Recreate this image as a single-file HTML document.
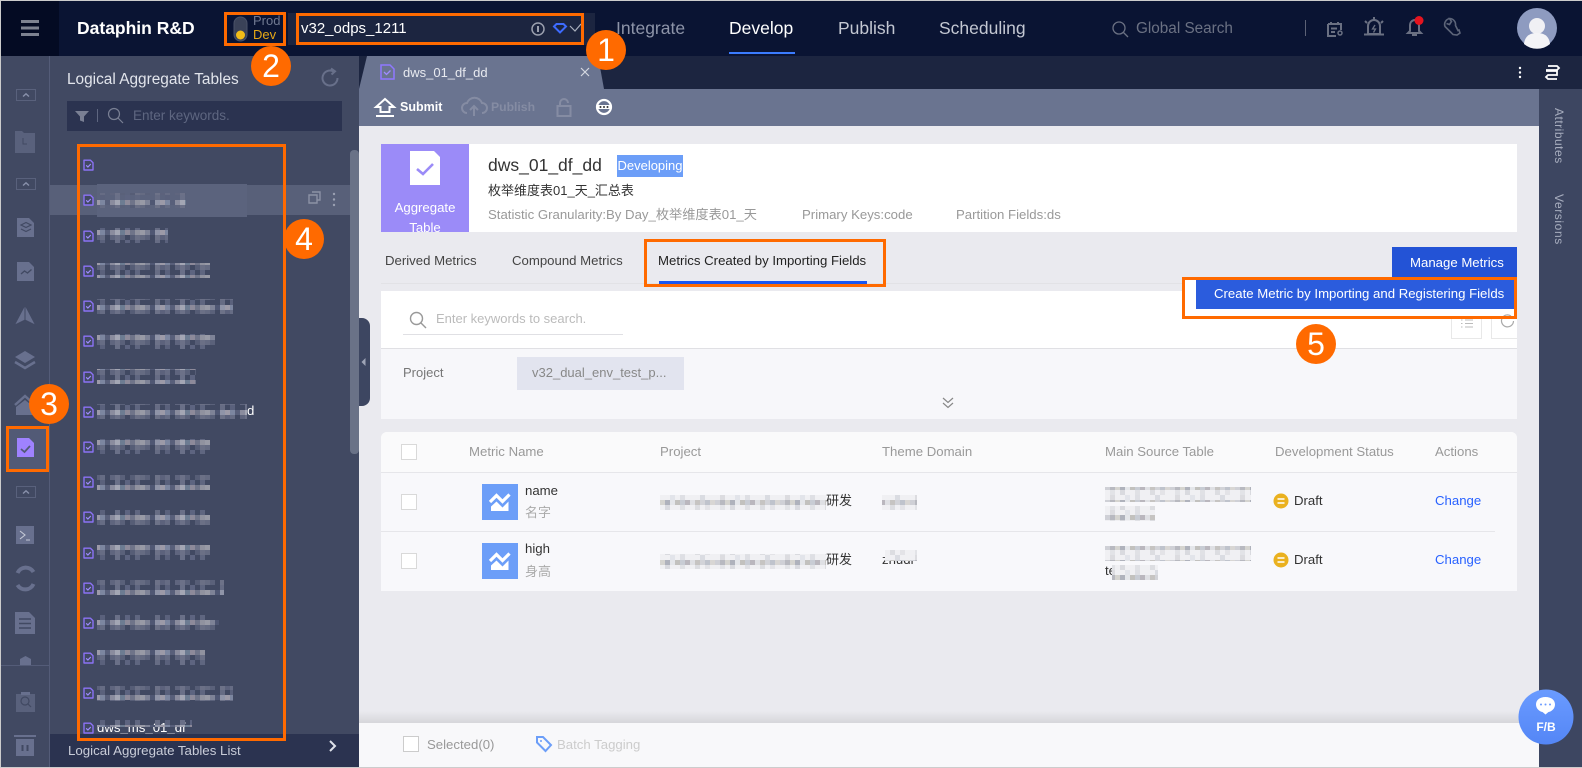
<!DOCTYPE html>
<html lang="en"><head><meta charset="utf-8"><title>Dataphin R&amp;D</title>
<style>
html,body{margin:0;padding:0;width:1582px;height:768px;overflow:hidden;background:#ccc}
body{position:relative;font-family:"Liberation Sans","Noto Sans CJK SC",sans-serif;font-size:13.2px;color:#333}
.a{position:absolute;box-sizing:border-box}
.t{position:absolute;white-space:nowrap;line-height:20px;height:20px}
.ob{position:absolute;box-sizing:border-box;border:3px solid #ff6a00;z-index:5}
.bd{position:absolute;width:40px;height:40px;border-radius:50%;background:#ff6a00;color:#fff;font-size:32px;line-height:40px;text-align:center;z-index:6}
.cb{position:absolute;box-sizing:border-box;width:16px;height:16px;background:#fff;border:1px solid #d9d9d9}
svg{position:absolute;left:0;top:0;overflow:visible}
</style></head><body>
<!-- structure -->
<div class="a" style="left:1px;top:1px;width:1581px;height:55px;background:#0a1433"></div>
<div class="a" style="left:1px;top:1px;width:58px;height:55px;background:#040b23"></div>
<div class="a" style="left:288px;top:13px;width:307px;height:32px;background:#1c2540"></div>
<div class="a" style="left:1px;top:56px;width:358px;height:711px;background:#414962"></div>
<div class="a" style="left:49px;top:56px;width:1px;height:711px;background:#545c78"></div>
<div class="a" style="left:359px;top:56px;width:1223px;height:33px;background:#1c2540"></div>
<div class="a" style="left:359px;top:89px;width:1180px;height:37px;background:#6a7490"></div>
<div class="a" style="left:359px;top:126px;width:1180px;height:641px;background:#eaeaef"></div>
<div class="a" style="left:1539px;top:89px;width:43px;height:678px;background:#3d4661"></div>
<div class="a" style="left:359px;top:56px;width:245px;height:33px;background:#6a7490;clip-path:polygon(8px 0,239px 0,245px 33px,0 33px)"></div>
<div class="a" style="left:67px;top:101px;width:275px;height:30px;background:#2b3350"></div>
<div class="a" style="left:50px;top:185px;width:300px;height:30px;background:#586079"></div>
<div class="a" style="left:350px;top:150px;width:9px;height:304px;background:#6a7287;border-radius:4px"></div>
<div class="a" style="left:50px;top:734px;width:309px;height:33px;background:#2b3350"></div>
<div class="a" style="left:6px;top:426px;width:43px;height:46px;background:#525a76"></div>
<div class="a" style="left:1px;top:665px;width:48px;height:1px;background:#545c78"></div>
<!-- card -->
<div class="a" style="left:381px;top:144px;width:1136px;height:88px;background:#fff"></div>
<div class="a" style="left:381px;top:144px;width:88px;height:88px;background:#9b8bf8;overflow:hidden;color:#fff;text-align:center;line-height:20px;padding-top:54px">Aggregate<br>Table</div>
<div class="a" style="left:381px;top:283px;width:1136px;height:1px;background:#e2e2e6"></div>
<div class="a" style="left:381px;top:291px;width:1136px;height:57px;background:#fff"></div>
<div class="a" style="left:381px;top:348px;width:1136px;height:71px;background:#f7f7fa;border-top:1px solid #e0e0e4"></div>
<div class="a" style="left:403px;top:334px;width:220px;height:1px;background:#e0e0e4"></div>
<div class="a" style="left:517px;top:357px;width:167px;height:33px;background:#e2e4ef"></div>
<div class="a" style="left:1451px;top:308px;width:31px;height:31px;background:#fff;border:1px solid #e8e8e8"></div>
<div class="a" style="left:1491px;top:308px;width:26px;height:31px;background:#fff;border:1px solid #e8e8e8;border-right:0"></div>
<div class="a" style="left:359px;top:318px;width:11px;height:88px;background:#3d4661;border-radius:0 8px 8px 0"></div>
<!-- buttons -->
<div class="a" style="left:1392px;top:247px;width:125px;height:30px;background:#2353d6"></div>
<div class="a" style="left:1182px;top:277px;width:335px;height:42px;background:#fff"></div>
<div class="a" style="left:1196px;top:280px;width:318px;height:29px;background:#2b5cdd"></div>
<!-- table -->
<div class="a" style="left:381px;top:432px;width:1136px;height:159px;background:#f8f8fb;border-radius:6px 6px 0 0"></div>
<div class="a" style="left:381px;top:432px;width:1136px;height:41px;background:#fafafb;border-radius:6px 6px 0 0;border-bottom:1px solid #e6e6ea"></div>
<div class="a" style="left:381px;top:531px;width:1114px;height:1px;background:#e6e6ea"></div>
<div class="cb" style="left:401px;top:444px"></div><div class="cb" style="left:401px;top:494px"></div><div class="cb" style="left:401px;top:553px"></div>
<div class="a" style="left:482px;top:484px;width:36px;height:36px;background:#6c9ef8"></div>
<div class="a" style="left:482px;top:543px;width:36px;height:36px;background:#6c9ef8"></div>
<!-- bottom bar -->
<div class="a" style="left:359px;top:703px;width:1180px;height:20px;background:linear-gradient(#eaeaef 40%,#d6d6da)"></div>
<div class="a" style="left:359px;top:723px;width:1180px;height:44px;background:#f8f8fa"></div>
<div class="cb" style="left:403px;top:736px;border-color:#ccc"></div>

<!-- text -->
<div class="t" style="left:77px;top:18px;font-size:17.5px;font-weight:bold;color:#fff">Dataphin R&amp;D</div>
<div class="t" style="left:253px;top:11px;color:#6f7890;font-size:13px">Prod</div>
<div class="t" style="left:253px;top:25px;color:#e6a817;font-size:13px">Dev</div>
<div class="t" style="left:301px;top:19px;font-size:15px;color:#fff">v32_odps_1211</div>
<div class="t" style="left:616px;top:18px;font-size:17.5px;color:#8d94a8">Integrate</div>
<div class="t" style="left:729px;top:18px;font-size:17.5px;color:#fff">Develop</div>
<div class="t" style="left:838px;top:18px;font-size:17.5px;color:#c3c7d2">Publish</div>
<div class="t" style="left:939px;top:18px;font-size:17.5px;color:#c3c7d2">Scheduling</div>
<div class="a" style="left:729px;top:52px;width:66px;height:2px;background:#3b7cff"></div>
<div class="t" style="left:1136px;top:19px;font-size:15.3px;color:#6b7183">Global Search</div>
<div class="t" style="left:67px;top:70px;font-size:15.4px;color:#e2e5ec">Logical Aggregate Tables</div>
<div class="t" style="left:133px;top:106px;font-size:13.5px;color:#5e6680">Enter keywords.</div>
<div class="t" style="left:68px;top:741px;font-size:13.3px;color:#c8ccd8">Logical Aggregate Tables List</div>
<div class="t" style="left:403px;top:63px;font-size:13px;color:#e8eaf0">dws_01_df_dd</div>
<div class="t" style="left:400px;top:97px;font-weight:bold;font-size:12.5px;color:#fff">Submit</div>
<div class="t" style="left:491px;top:97px;font-weight:bold;font-size:12.2px;color:#858ca3">Publish</div>
<div class="t" style="left:488px;top:155px;font-size:17.5px;color:#333">dws_01_df_dd</div>
<div class="a" style="left:617px;top:155px;width:66px;height:22px;background:#6c9ef8;color:#fff;line-height:22px;white-space:nowrap;overflow:hidden;text-align:center;font-size:13px">Developing</div>
<div class="t" style="left:488px;top:181px;font-size:13px;color:#333">枚举维度表01_天_汇总表</div>
<div class="t" style="left:488px;top:205px;color:#999">Statistic Granularity:By Day_枚举维度表01_天</div>
<div class="t" style="left:802px;top:205px;color:#999">Primary Keys:code</div>
<div class="t" style="left:956px;top:205px;color:#999">Partition Fields:ds</div>
<div class="t" style="left:385px;top:251px;color:#444">Derived Metrics</div>
<div class="t" style="left:512px;top:251px;color:#444">Compound Metrics</div>
<div class="t" style="left:658px;top:251px;color:#222">Metrics Created by Importing Fields</div>
<div class="a" style="left:659px;top:281px;width:208px;height:3px;background:#1a56f0;z-index:4"></div>
<div class="t" style="left:1410px;top:253px;color:#fff">Manage Metrics</div>
<div class="t" style="left:1214px;top:284px;color:#fff;font-size:13.2px">Create Metric by Importing and Registering Fields</div>
<div class="t" style="left:436px;top:309px;font-size:13px;color:#bbb">Enter keywords to search.</div>
<div class="t" style="left:403px;top:363px;font-size:13px;color:#777">Project</div>
<div class="t" style="left:532px;top:363px;font-size:13px;color:#888">v32_dual_env_test_p...</div>
<div class="t" style="left:469px;top:442px;color:#999">Metric Name</div>
<div class="t" style="left:660px;top:442px;color:#999">Project</div>
<div class="t" style="left:882px;top:442px;color:#999">Theme Domain</div>
<div class="t" style="left:1105px;top:442px;color:#999">Main Source Table</div>
<div class="t" style="left:1275px;top:442px;color:#999">Development Status</div>
<div class="t" style="left:1435px;top:442px;color:#999">Actions</div>
<div class="t" style="left:525px;top:481px">name</div>
<div class="t" style="left:525px;top:503px;font-size:13px;color:#aaa">名字</div>
<div class="t" style="left:525px;top:539px">high</div>
<div class="t" style="left:525px;top:562px;font-size:13px;color:#aaa">身高</div>
<div class="t" style="left:826px;top:491px;font-size:13px">研发</div>
<div class="t" style="left:826px;top:550px;font-size:13px">研发</div>
<div class="t" style="left:882px;top:550px">zhudi</div>
<div class="t" style="left:1105px;top:561px">te</div>
<div class="t" style="left:1294px;top:491px">Draft</div>
<div class="t" style="left:1294px;top:550px">Draft</div>
<div class="t" style="left:1435px;top:491px;color:#2962ff">Change</div>
<div class="t" style="left:1435px;top:550px;color:#2962ff">Change</div>
<div class="t" style="left:427px;top:735px;color:#999">Selected(0)</div>
<div class="t" style="left:557px;top:735px;color:#ccc">Batch Tagging</div>
<div class="t" style="left:247px;top:401px;color:#fff">d</div>
<div class="t" style="left:97px;top:718px;color:#fff;height:16px;overflow:hidden;line-height:20px">dws_ms_01_df</div>
<div class="a" style="left:1552px;top:108px;width:14px;height:60px;writing-mode:vertical-rl;font-size:12px;letter-spacing:.5px;line-height:14px;color:#a7adbe;white-space:nowrap">Attributes</div>
<div class="a" style="left:1552px;top:194px;width:14px;height:60px;writing-mode:vertical-rl;font-size:12px;letter-spacing:.6px;line-height:14px;color:#a7adbe;white-space:nowrap">Versions</div>

<!-- icons + mosaics -->
<svg width="1582" height="768" viewBox="0 0 1582 768" style="z-index:3">
<defs>
<pattern id="m1" width="65" height="15" patternUnits="userSpaceOnUse">
<rect x="5" y="0" width="5" height="5" fill="#5f6680"/><rect x="25" y="0" width="5" height="5" fill="#666c84"/><rect x="35" y="0" width="5" height="5" fill="#5a617c"/><rect x="50" y="0" width="5" height="5" fill="#6a7088"/><rect x="60" y="0" width="5" height="5" fill="#5d6480"/>
<rect x="0" y="5" width="5" height="5" fill="#6f7489"/><rect x="5" y="5" width="5" height="5" fill="#90929f"/><rect x="10" y="5" width="5" height="5" fill="#989aa6"/><rect x="15" y="5" width="5" height="5" fill="#7e8397"/><rect x="20" y="5" width="5" height="5" fill="#4f5773"/><rect x="25" y="5" width="5" height="5" fill="#8f94a8"/><rect x="30" y="5" width="5" height="5" fill="#9c9aa8"/><rect x="35" y="5" width="5" height="5" fill="#7c86a0"/><rect x="40" y="5" width="5" height="5" fill="#585f7a"/><rect x="45" y="5" width="5" height="5" fill="#8a8c9e"/><rect x="50" y="5" width="5" height="5" fill="#a3a6b4"/><rect x="55" y="5" width="5" height="5" fill="#6d7c92"/><rect x="60" y="5" width="5" height="5" fill="#8d8a9a"/>
<rect x="0" y="10" width="5" height="5" fill="#565d76"/><rect x="5" y="10" width="5" height="5" fill="#6b7086"/><rect x="10" y="10" width="5" height="5" fill="#656b82"/><rect x="15" y="10" width="5" height="5" fill="#5a617a"/><rect x="25" y="10" width="5" height="5" fill="#6d7288"/><rect x="30" y="10" width="5" height="5" fill="#5c627c"/><rect x="35" y="10" width="5" height="5" fill="#666c84"/><rect x="45" y="10" width="5" height="5" fill="#5f657e"/><rect x="50" y="10" width="5" height="5" fill="#6c7188"/><rect x="55" y="10" width="5" height="5" fill="#5a617a"/>
</pattern>
<pattern id="m2" width="65" height="15" patternUnits="userSpaceOnUse">
<rect x="0" y="0" width="65" height="15" fill="#f0f0f3"/>
<rect x="5" y="0" width="5" height="5" fill="#dcdce0"/><rect x="20" y="0" width="5" height="5" fill="#e2e4ea"/><rect x="30" y="0" width="5" height="5" fill="#dedfe4"/><rect x="50" y="0" width="5" height="5" fill="#dadce2"/>
<rect x="0" y="5" width="5" height="5" fill="#cfd0d6"/><rect x="5" y="5" width="5" height="5" fill="#b8b9c0"/><rect x="10" y="5" width="5" height="5" fill="#d5d4d0"/><rect x="15" y="5" width="5" height="5" fill="#afb2bc"/><rect x="20" y="5" width="5" height="5" fill="#e4e6ea"/><rect x="25" y="5" width="5" height="5" fill="#c2c1be"/><rect x="30" y="5" width="5" height="5" fill="#c8ccd4"/><rect x="35" y="5" width="5" height="5" fill="#bab7be"/><rect x="40" y="5" width="5" height="5" fill="#dfe0e4"/><rect x="45" y="5" width="5" height="5" fill="#c6c4c2"/><rect x="50" y="5" width="5" height="5" fill="#d2d3d8"/><rect x="55" y="5" width="5" height="5" fill="#bfc3cc"/><rect x="60" y="5" width="5" height="5" fill="#d8d6d4"/>
<rect x="5" y="10" width="5" height="5" fill="#e2e3e7"/><rect x="15" y="10" width="5" height="5" fill="#d9dadf"/><rect x="30" y="10" width="5" height="5" fill="#e0e1e5"/><rect x="45" y="10" width="5" height="5" fill="#dcdde1"/><rect x="55" y="10" width="5" height="5" fill="#e3e3e7"/>
</pattern>
<g id="li"><path d="M1 1.2h6.5L10 3.7V11H1z" fill="#414962" stroke="#8b72f5" stroke-width="1.4" stroke-linejoin="round"/><path d="M3.2 6.3l1.7 1.7 2.9-3" fill="none" stroke="#9f8cff" stroke-width="1.2"/></g>
<g id="up"><rect x=".5" y=".5" width="19" height="11" fill="none" stroke="#59617c"/><path d="M7 7.5l3-2.7 3 2.7" fill="none" stroke="#8890aa" stroke-width="1.4"/></g>
<g id="chart"><path d="M8 18l6.500-6.500 6 6 7-7" fill="none" stroke="#fff" stroke-width="3.200"/><path d="M9 27v-4.500l5.500-5 6 6 6-6V27z" fill="#fff"/></g>
<linearGradient id="fbg" x1="0" y1="0" x2="0" y2="1"><stop offset="0" stop-color="#6a9bff"/><stop offset="1" stop-color="#5486f6"/></linearGradient>
</defs>

<!-- hamburger -->
<path d="M21 21.500h18M21 28h18M21 34.500h18" stroke="#7d8290" stroke-width="3"/>
<!-- toggle -->
<rect x="234" y="17" width="13" height="24" rx="6.500" fill="#3a4258" stroke="#4a5268"/>
<circle cx="240.500" cy="35" r="4.500" fill="#f2bd18"/>
<!-- project selector icons -->
<circle cx="538" cy="29" r="6" fill="none" stroke="#9a9fae" stroke-width="1.500"/><path d="M538 26v6" stroke="#9a9fae" stroke-width="2"/>
<path d="M554 26.500l2.500-2.500h7l2.500 2.500-6 6z" fill="none" stroke="#3d6bff" stroke-width="2"/>
<path d="M570 26l5 5 6-7" fill="none" stroke="#aab0bd" stroke-width="1.200"/>
<!-- global search -->
<circle cx="1119" cy="28" r="6" fill="none" stroke="#6b7183" stroke-width="1.300"/><path d="M1123.500 32.500l4.500 4.500" stroke="#6b7183" stroke-width="1.300"/>
<path d="M1305.500 20v16" stroke="#5c6276"/>
<!-- header icons -->
<path d="M1328 24h13v6M1328 24v12h8M1331 22v3M1338 22v3M1331 28.500h6M1331 32h4" fill="none" stroke="#6a7082" stroke-width="2"/><circle cx="1340" cy="33" r="2" fill="none" stroke="#6a7082" stroke-width="1.500"/>
<path d="M1368 34v-8a6 6 0 0 1 12 0v8zM1364 34.500h20M1374 17v3M1365 21l2 2M1383 21l-2 2" fill="none" stroke="#6a7082" stroke-width="2"/><path d="M1375 25l-2.500 4h3l-2 3.500" fill="none" stroke="#6a7082" stroke-width="1.300"/>
<path d="M1410 31v-6a5 5 0 0 1 9 -3v9l2 2h-13zM1412 35h5" fill="none" stroke="#6a7082" stroke-width="2"/><circle cx="1419" cy="20.500" r="4.500" fill="#e5141f"/>
<path d="M1450 18.500a6 6 0 0 0-5 8l8 8 4 .5 3-2-1-3-1 .5-2.500-5a6 6 0 0 0-6-7l2 3-2 3-3-1" fill="none" stroke="#5c6478" stroke-width="1.600"/>
<!-- avatar -->
<circle cx="1537" cy="28" r="20" fill="#8e9bc0"/>
<circle cx="1537" cy="26" r="8" fill="#f0f0f4"/><path d="M1524 44c1-9 7-11 13-11s12 2 13 11a20 20 0 0 1-26 0z" fill="#f4f4f7"/>
<!-- top right -->
<circle cx="1520" cy="68" r="1.200" fill="#fff"/><circle cx="1520" cy="72.500" r="1.200" fill="#fff"/><circle cx="1520" cy="77" r="1.200" fill="#fff"/>
<path d="M1548 66h9l2 2-2 2h-11M1546 71h11v4h-9l-2 2 2 2h9" fill="none" stroke="#fff" stroke-width="1.800"/>

<!-- sidebar title icons -->
<path d="M337.500 78a7.500 7.500 0 1 1-4-6.600M331 68.500l4 2.800-3.500 3.200" fill="none" stroke="#68708a" stroke-width="2"/>
<path d="M75 111h14l-5 5.500V122l-4-1.500v-4z" fill="#7a8094"/><path d="M97.500 109v13" stroke="#5e6680"/>
<circle cx="114" cy="114" r="5.500" fill="none" stroke="#7a8094" stroke-width="1.200"/><path d="M118 118l5 5" stroke="#7a8094" stroke-width="1.200"/>
<path d="M330 741l5 5-5 5" fill="none" stroke="#dfe2ea" stroke-width="2"/>

<!-- icon strip -->
<use href="#up" x="16" y="89"/>
<path d="M15 131h7l2 2h11v20H15z" fill="#59617c"/><path d="M23 138v6h4" fill="none" stroke="#414962"/>
<use href="#up" x="16" y="178"/>
<path d="M17 218h12l5 5v14H17z" fill="#68708e"/><path d="M21 225l5-2.500 5 2.500-5 2.500zM21 229l5 2.500 5-2.500" fill="none" stroke="#414962" stroke-width="1.200"/>
<path d="M17 262h12l5 5v14H17z" fill="#68708e"/><path d="M21 274l3.500-3 3 2 4-3.500" fill="none" stroke="#414962" stroke-width="1.300"/>
<path d="M25 306l10 19-10-5-10 5z" fill="#68708e"/><path d="M25 306v14M15 325l10-5 10 5" fill="none" stroke="#414962" stroke-width="1"/>
<path d="M25 351l10 6-10 6-10-6z" fill="#68708e"/><path d="M15 362l10 6 10-6" fill="none" stroke="#68708e" stroke-width="2.500"/>
<path d="M15 405l10-9 10 9" fill="none" stroke="#68708e" stroke-width="2.500"/><path d="M16 407l9-7 9 7v8H16z" fill="#68708e"/>
<path d="M17 438h12l5 5v14H17z" fill="#9f82ff"/><path d="M21 449l3.500 3 5.500-6" fill="none" stroke="#525a76" stroke-width="1.800"/>
<use href="#up" x="16" y="486"/>
<path d="M16 526h18v18H16z" fill="#68708e"/><path d="M20 531l5 4-5 4M26 540h4" fill="none" stroke="#c5c9d6" stroke-width="1.100"/>
<path d="M17.500 573a9 9 0 0 1 16-1" fill="none" stroke="#68708e" stroke-width="4"/><path d="M33.500 584a9 9 0 0 1-16 1" fill="none" stroke="#68708e" stroke-width="4"/>
<path d="M15 612h14l6 6v16H15z" fill="#68708e"/><path d="M19 619h12M19 623.500h12M19 628h12" stroke="#414962" stroke-width="1.500"/>
<path d="M20 659l5.500-3 5.500 3v6H20z" fill="#68708e"/>
<path d="M16 694h19v18H16z" fill="#59617c"/><path d="M21 692h9v3h-9z" fill="#68708e"/><circle cx="25" cy="701" r="4" fill="none" stroke="#414962" stroke-width="1.200"/><path d="M28 704l3 3" stroke="#414962" stroke-width="1.200"/>
<path d="M14 736h22" stroke="#68708e" stroke-width="2"/><path d="M16 739h18v17H16z" fill="#68708e"/><path d="M22.500 745v6M27.500 745v6" stroke="#414962" stroke-width="2"/>

<!-- list icons -->
<use href="#li" x="83" y="159"/><use href="#li" x="83" y="194"/><use href="#li" x="83" y="230"/><use href="#li" x="83" y="265"/><use href="#li" x="83" y="300"/><use href="#li" x="83" y="335"/><use href="#li" x="83" y="371"/><use href="#li" x="83" y="406"/><use href="#li" x="83" y="441"/><use href="#li" x="83" y="476"/><use href="#li" x="83" y="511"/><use href="#li" x="83" y="547"/><use href="#li" x="83" y="582"/><use href="#li" x="83" y="617"/><use href="#li" x="83" y="652"/><use href="#li" x="83" y="687"/><use href="#li" x="83" y="722"/>
<!-- mosaics -->
<rect x="97" y="184" width="150" height="33" fill="#5b637d"/>
<g fill="url(#m1)">
<rect x="97" y="193" width="89" height="15"/><rect x="97" y="228" width="71" height="15"/><rect x="97" y="263" width="113" height="15"/><rect x="97" y="299" width="136" height="15"/><rect x="97" y="334" width="118" height="15"/><rect x="97" y="369" width="99" height="15"/><rect x="97" y="404" width="150" height="15"/><rect x="97" y="439" width="113" height="15"/><rect x="97" y="475" width="113" height="15"/><rect x="97" y="510" width="113" height="15"/><rect x="97" y="545" width="113" height="15"/><rect x="97" y="580" width="127" height="15"/><rect x="97" y="615" width="122" height="15"/><rect x="97" y="650" width="108" height="15"/><rect x="97" y="686" width="136" height="15"/><rect x="97" y="720" width="95" height="7"/>
</g>
<path d="M309 195h8v8h-8zM312 192h8v8h-3" fill="none" stroke="#8c92a6" stroke-width="1.400"/>
<circle cx="334" cy="194" r="1.200" fill="#9aa0b2"/><circle cx="334" cy="199.500" r="1.200" fill="#9aa0b2"/><circle cx="334" cy="205" r="1.200" fill="#9aa0b2"/>

<!-- tab & toolbar -->
<path d="M381 65h9l4 4v10h-13z" fill="none" stroke="#8f78ff" stroke-width="1.500"/><path d="M384 72l2.500 2.500 4-4" fill="none" stroke="#9f8cff" stroke-width="1.300"/>
<path d="M581 68l8 8M589 68l-8 8" stroke="#d5d8e0" stroke-width="1.200"/>
<path d="M385 99l9 8h-4.500v5h-9v-5H376zM376 116h18" fill="none" stroke="#fff" stroke-width="2"/>
<path d="M467 113a5 5 0 0 1 0-10 8 8 0 0 1 15 0 5 5 0 0 1 0 10M474 116v-9M470 110l4-4 4 4" fill="none" stroke="#858ca3" stroke-width="2"/>
<rect x="557.500" y="106" width="13" height="10" fill="none" stroke="#858ca3" stroke-width="2"/><path d="M560 106v-3a4 4 0 0 1 8 0" fill="none" stroke="#858ca3" stroke-width="2"/>
<circle cx="604" cy="107" r="7" fill="none" stroke="#fff" stroke-width="2.200"/><path d="M597 107h14" stroke="#fff" stroke-width="4"/><circle cx="600.500" cy="107" r="1" fill="#333"/><circle cx="604" cy="107" r="1" fill="#333"/><circle cx="607.500" cy="107" r="1" fill="#333"/>

<!-- card icon -->
<path d="M410 151h24l6 6v28h-30z" fill="#fff"/><path d="M417 169l6 5 10-10" fill="none" stroke="#9b8bf8" stroke-width="2.600"/>
<!-- search/filters -->
<circle cx="416.500" cy="318.500" r="6" fill="none" stroke="#999" stroke-width="1.400"/><path d="M421 323l5 5" stroke="#999" stroke-width="1.400"/>
<path d="M1461 320h1.500M1461 323.500h1.500M1461 327h1.500M1465 320h8M1465 323.500h8M1465 327h8" stroke="#bbb"/>
<path d="M1511 316a6 6 0 1 0 2.500 5" fill="none" stroke="#aaa" stroke-width="1.200"/>
<path d="M365.500 358v8l-4-4z" fill="#9ea4b6"/>
<path d="M943 398l5 4.500 5-4.500M943 403l5 4.500 5-4.500" fill="none" stroke="#888" stroke-width="1.200"/>
<!-- table icons -->
<use href="#chart" x="482" y="484"/><use href="#chart" x="482" y="543"/>
<g fill="url(#m2)">
<rect x="660" y="495" width="166" height="15"/><rect x="660" y="554" width="166" height="15"/>
<rect x="882" y="495" width="35" height="15"/><rect x="885" y="550" width="32" height="11"/>
<rect x="1105" y="487" width="146" height="15"/><rect x="1105" y="506" width="50" height="15"/>
<rect x="1105" y="546" width="146" height="15"/><rect x="1112" y="565" width="46" height="15"/>
</g>
<circle cx="1281" cy="501" r="7.500" fill="#eab11f"/><path d="M1277.500 499h7M1277.500 503h7" stroke="#fff" stroke-width="1.500"/>
<circle cx="1281" cy="560" r="7.500" fill="#eab11f"/><path d="M1277.500 558h7M1277.500 562h7" stroke="#fff" stroke-width="1.500"/>
<!-- tag -->
<path d="M537 737h6l8 8-5.500 6-8.500-8.500z" fill="none" stroke="#6c9ef8" stroke-width="2"/><circle cx="541" cy="741" r="1" fill="#6c9ef8"/>
<!-- FB -->
<circle cx="1546" cy="717" r="27.500" fill="url(#fbg)"/>
<path d="M1545.500 697c6 0 9.500 3.200 9.500 7.500 0 4.300-3.500 7-6.500 7.500l-3 2.500-3-2.500c-3-.5-6.500-3.200-6.500-7.500 0-4.300 3.500-7.500 9.500-7.500z" fill="#fff"/>
<circle cx="1541" cy="704.500" r="1" fill="#6a9bff"/><circle cx="1545.500" cy="704.500" r="1" fill="#6a9bff"/><circle cx="1550" cy="704.500" r="1" fill="#6a9bff"/>
<text x="1546" y="731" text-anchor="middle" font-size="12" font-weight="bold" fill="#fff" font-family="Liberation Sans, sans-serif">F/B</text>
</svg>

<!-- orange boxes -->
<div class="ob" style="left:224px;top:12px;width:62px;height:34px"></div>
<div class="ob" style="left:296px;top:13px;width:288px;height:32px"></div>
<div class="ob" style="left:77px;top:144px;width:209px;height:597px"></div>
<div class="ob" style="left:6px;top:426px;width:43px;height:46px"></div>
<div class="ob" style="left:644px;top:239px;width:242px;height:48px"></div>
<div class="ob" style="left:1182px;top:277px;width:335px;height:42px"></div>
<!-- badges -->
<div class="bd" style="left:586px;top:30px">1</div>
<div class="bd" style="left:251px;top:46px">2</div>
<div class="bd" style="left:29px;top:384px">3</div>
<div class="bd" style="left:284px;top:219px">4</div>
<div class="bd" style="left:1296px;top:324px">5</div>
</body></html>
